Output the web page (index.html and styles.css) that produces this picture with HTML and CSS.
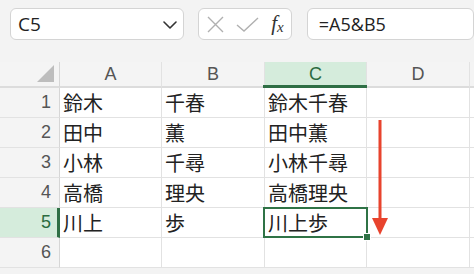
FILE: index.html
```html
<!DOCTYPE html>
<html lang="ja">
<head>
<meta charset="utf-8">
<link rel="stylesheet" href="styles.css">
</head>
<body>
<div class="toolbar">
  <div class="box namebox">
    <span class="ref">C5</span>
    <svg class="chev" width="14" height="8" viewBox="0 0 14 8"><polyline points="1,1 7,7 13,1" fill="none" stroke="#333" stroke-width="1.6" stroke-linecap="round" stroke-linejoin="round"/></svg>
  </div>
  <div class="box fnbtns">
    <svg width="17" height="17" viewBox="0 0 17 17"><path d="M1 1 L16 16 M16 1 L1 16" stroke="#b0b0b0" stroke-width="1.4" fill="none"/></svg>
    <svg width="23" height="15" viewBox="0 0 23 15"><path d="M1 8 L8 14 L22 1" stroke="#b0b0b0" stroke-width="1.4" fill="none"/></svg>
    <span class="fx">f<sub>x</sub></span>
  </div>
  <div class="box formula">=A5&amp;B5</div>
</div>
<div class="sheet">
  <div class="grid">
    <div class="hd corner"><span class="tri"></span></div>
    <div class="hd col">A</div>
    <div class="hd col">B</div>
    <div class="hd col sel">C</div>
    <div class="hd col">D</div>
    <div class="hd tail"></div>

    <div class="rn">1</div><div class="c">鈴木</div><div class="c">千春</div><div class="c">鈴木千春</div><div class="c"></div><div class="c tail"></div>
    <div class="rn">2</div><div class="c">田中</div><div class="c">薫</div><div class="c">田中薫</div><div class="c"></div><div class="c tail"></div>
    <div class="rn">3</div><div class="c">小林</div><div class="c">千尋</div><div class="c">小林千尋</div><div class="c"></div><div class="c tail"></div>
    <div class="rn">4</div><div class="c">高橋</div><div class="c">理央</div><div class="c">高橋理央</div><div class="c"></div><div class="c tail"></div>
    <div class="rn sel">5</div><div class="c">川上</div><div class="c">歩</div><div class="c active">川上歩<span class="handle"></span></div><div class="c"></div><div class="c tail"></div>
    <div class="rn">6</div><div class="c"></div><div class="c"></div><div class="c"></div><div class="c"></div><div class="c tail"></div>
  </div>
  <svg class="arrow" width="18" height="118" viewBox="0 0 18 118"><rect x="7.5" y="0" width="3" height="102" fill="#e8432d"/><polygon points="1,98 17,98 9,115" fill="#e8432d"/></svg>
</div>
</body>
</html>
```
FILE: styles.css
```css
html, body {
  margin: 0;
  padding: 0;
}
body {
  width: 474px;
  height: 274px;
  overflow: hidden;
  background: #f3f3f3;
  font-family: "Liberation Sans", "Noto Sans CJK JP", sans-serif;
  color: #222;
}
.toolbar {
  height: 62px;
  box-sizing: border-box;
  padding: 8px 0 0 10px;
  display: flex;
  align-items: flex-start;
}
.box {
  height: 32px;
  box-sizing: border-box;
  border: 1px solid #d4d4d4;
  border-radius: 6px;
  background: #fff;
  display: flex;
  align-items: center;
}
.namebox {
  width: 175px;
  padding: 0 6px 0 7px;
  justify-content: space-between;
}
.ref {
  font-family: "Open Sans", "Liberation Sans", sans-serif;
  font-size: 19px;
  color: #222;
}
.chev {
  margin-top: 1px;
}
.fnbtns {
  width: 94px;
  margin-left: 14px;
  padding: 0 7px 0 8px;
  gap: 12px;
}
.fx {
  font-family: "Liberation Serif", serif;
  font-style: italic;
  font-size: 21px;
  color: #333;
  line-height: 1;
}
.fx sub {
  font-size: 15px;
  vertical-align: -2px;
}
.formula {
  width: 168px;
  margin-left: 15px;
  padding-left: 11px;
  font-family: "Open Sans", "Liberation Sans", sans-serif;
  font-size: 18px;
  color: #222;
}
.sheet {
  position: relative;
}
.grid {
  display: grid;
  grid-template-columns: 60px 102px 103px 102px 103px 4px;
  grid-template-rows: 26px repeat(6, 30px);
  background: #fff;
}
.hd {
  position: relative;
  background: #f4f4f4;
  border-right: 1px solid #e2e2e2;
  border-bottom: 2px solid #dcdcdc;
  box-sizing: border-box;
  display: flex;
  align-items: center;
  justify-content: center;
  font-size: 18px;
  color: #555;
}
.hd.tail {
  border-right: none;
}
.corner {
  justify-content: flex-end;
  align-items: flex-end;
  padding: 0 5px 4px 0;
  border-right: 1px solid #d6d6d6;
}
.tri {
  width: 0;
  height: 0;
  border-left: 17px solid transparent;
  border-bottom: 17px solid #bdbdbd;
}
.hd.sel {
  background: #d5ecdc;
  color: #2b6b40;
  border-bottom-color: transparent;
}
.hd.sel::after {
  content: "";
  position: absolute;
  left: -2px;
  right: -3px;
  bottom: -2px;
  height: 3px;
  background: #2f6f45;
}
.rn {
  background: #f4f4f4;
  border-right: 1px solid #d6d6d6;
  border-bottom: 1px solid #e2e2e2;
  box-sizing: border-box;
  display: flex;
  align-items: center;
  justify-content: flex-end;
  padding-right: 8px;
  font-size: 18px;
  color: #555;
}
.rn.sel {
  background: #d5ecdc;
  color: #2b6b40;
  border-right: 3px solid #2f6f45;
  padding-right: 6px;
}
.c {
  position: relative;
  border-right: 1px solid #e2e2e2;
  border-bottom: 1px solid #e2e2e2;
  box-sizing: border-box;
  display: flex;
  align-items: center;
  padding-left: 3px;
  font-family: "Noto Sans CJK JP", sans-serif;
  font-size: 20px;
  color: #222;
  white-space: nowrap;
}
.c.tail {
  border-right: none;
}
.c.active::after {
  content: "";
  position: absolute;
  left: -2px;
  top: -1px;
  right: -2px;
  bottom: -1px;
  border: 2px solid #2f7346;
}
.handle {
  position: absolute;
  right: -5px;
  bottom: -4px;
  width: 6px;
  height: 6px;
  background: #2f7346;
  border: 1px solid #fff;
  z-index: 2;
}
.arrow {
  position: absolute;
  left: 371px;
  top: 58px;
}
```
